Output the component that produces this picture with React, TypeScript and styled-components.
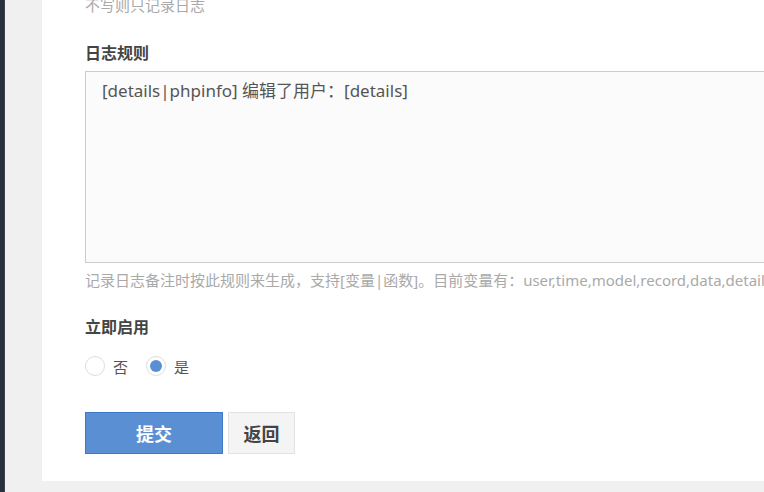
import React from "react";
import styled, { createGlobalStyle } from "styled-components";

const GlobalStyle = createGlobalStyle`
  html, body {
    margin: 0;
    padding: 0;
    background: #f0f0f0;
    font-family: "Noto Sans", "Noto Sans CJK SC", sans-serif;
  }
`;

export default function App() {
  return (
    <>
      <GlobalStyle />
      <Page>
        <Sidebar />
        <Content>
          <Panel>
            <Hint>不写则只记录日志</Hint>

            <Field>
              <Label>日志规则</Label>
              <TextArea defaultValue="[details|phpinfo] 编辑了用户：[details]" />
              <Hint>
                记录日志备注时按此规则来生成，支持[变量|函数]。目前变量有：user,time,model,record,data,detail
              </Hint>
            </Field>

            <Field>
              <Label>立即启用</Label>
              <RadioRow>
                <RadioItem>
                  <RadioDot />
                  否
                </RadioItem>
                <RadioItem>
                  <RadioDot checked />
                  是
                </RadioItem>
              </RadioRow>
            </Field>

            <Actions>
              <Button primary>提交</Button>
              <Button>返回</Button>
            </Actions>
          </Panel>
        </Content>
      </Page>
    </>
  );
}

const Page = styled.div`
  display: flex;
  height: 492px;
  overflow: hidden;
`;

const Sidebar = styled.div`
  width: 4px;
  flex-shrink: 0;
  background: #27303b;
  border-right: 1px solid #3a4450;
`;

const Content = styled.div`
  flex: 1;
  padding-left: 37px;
  min-width: 0;
`;

const Panel = styled.div`
  width: 1000px;
  margin-top: -5px;
  padding: 0 0 27px 43px;
  background: #fff;
`;

const Field = styled.div`
  display: flex;
  flex-direction: column;
  margin-top: 27px;

  & + & {
    margin-top: 26px;
  }
`;

const Label = styled.div`
  font-size: 16px;
  line-height: 22px;
  font-weight: bold;
  color: #444;
`;

const Hint = styled.div`
  font-size: 15px;
  line-height: 20px;
  color: #a9a9a9;
  white-space: nowrap;
`;

const TextArea = styled.textarea`
  box-sizing: border-box;
  width: 100%;
  height: 192px;
  margin: 7px 0 7px;
  padding: 7px 16px;
  border: 1px solid #cccccc;
  background: #fbfbfb;
  font-family: inherit;
  font-size: 17px;
  line-height: 24px;
  color: #555;
  resize: none;
  outline: none;
`;

const RadioRow = styled.div`
  display: flex;
  align-items: center;
  gap: 18px;
  margin-top: 18px;
  height: 20px;
`;

const RadioItem = styled.label`
  display: flex;
  align-items: center;
  gap: 8px;
  font-size: 15px;
  color: #555;
`;

const RadioDot = styled.span<{ checked?: boolean }>`
  box-sizing: border-box;
  width: 20px;
  height: 20px;
  border-radius: 50%;
  border: 1px solid #dddddd;
  background: #fff;
  position: relative;

  &::after {
    content: "";
    display: ${(p) => (p.checked ? "block" : "none")};
    position: absolute;
    left: 3px;
    top: 3px;
    width: 12px;
    height: 12px;
    border-radius: 50%;
    background: #5a8fd4;
  }
`;

const Actions = styled.div`
  display: flex;
  gap: 5px;
  margin-top: 36px;
`;

const Button = styled.button<{ primary?: boolean }>`
  box-sizing: border-box;
  height: 42px;
  width: ${(p) => (p.primary ? "138px" : "67px")};
  border: 1px solid ${(p) => (p.primary ? "#3d79c7" : "#e3e3e3")};
  background: ${(p) => (p.primary ? "#5b8fd4" : "#f4f4f4")};
  color: ${(p) => (p.primary ? "#fff" : "#444")};
  font-family: inherit;
  font-size: 18px;
  font-weight: bold;
  padding: 0;
  cursor: pointer;
`;
